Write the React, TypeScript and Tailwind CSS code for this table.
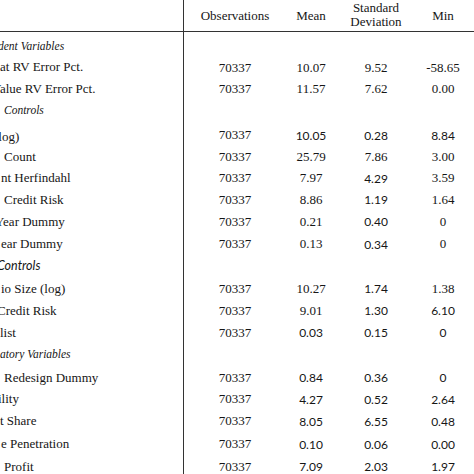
import React from "react";

type Cell = { v: string; sans?: boolean };
type Row = {
  h: string;
  label: string;
  ml: string;
  kind?: "ital" | "italSans";
  cells?: Cell[];
  extra?: string;
};

const S = (v: string): Cell => ({ v, sans: true });
const T = (v: string): Cell => ({ v });

const rows: Row[] = [
  { h: "h-[25px]", extra: "pt-[5px]", label: "dent Variables", ml: "-ml-[2px]", kind: "ital" },
  { h: "h-[20px]", extra: "-mt-[2px]", label: "at RV Error Pct.", ml: "ml-0", cells: [T("70337"), T("10.07"), T("9.52"), T("-58.65")] },
  { h: "h-[22px]", label: "Value RV Error Pct.", ml: "-ml-[8px]", cells: [T("70337"), T("11.57"), T("7.62"), T("0.00")] },
  { h: "h-[24px]", label: "Controls", ml: "ml-[4px]", kind: "ital" },
  { h: "h-[23px]", extra: "pt-[3px]", label: "(log)", ml: "-ml-[6px]", cells: [T("70337"), S("10.05"), S("0.28"), S("8.84")] },
  { h: "h-[21px]", label: "Count", ml: "ml-[4px]", cells: [T("70337"), T("25.79"), T("7.86"), T("3.00")] },
  { h: "h-[21px]", label: "nt Herfindahl", ml: "ml-[1px]", cells: [T("70337"), T("7.97"), S("4.29"), T("3.59")] },
  { h: "h-[22px]", label: "Credit Risk", ml: "ml-[4px]", cells: [T("70337"), T("8.86"), S("1.19"), T("1.64")] },
  { h: "h-[22px]", label: "Year Dummy", ml: "-ml-[5px]", cells: [T("70337"), T("0.21"), S("0.40"), T("0")] },
  { h: "h-[23px]", label: "ear Dummy", ml: "ml-[1px]", cells: [T("70337"), T("0.13"), S("0.34"), T("0")] },
  { h: "h-[22px]", label: "Controls", ml: "-ml-[3px]", kind: "italSans" },
  { h: "h-[22px]", label: "io Size (log)", ml: "ml-[1px]", cells: [T("70337"), T("10.27"), S("1.74"), T("1.38")] },
  { h: "h-[22px]", label: "Credit Risk", ml: "-ml-[3px]", cells: [T("70337"), T("9.01"), S("1.30"), S("6.10")] },
  { h: "h-[22px]", label: "list", ml: "ml-0", cells: [T("70337"), S("0.03"), S("0.15"), S("0")] },
  { h: "h-[23px]", label: "atory Variables", ml: "ml-0", kind: "ital" },
  { h: "h-[22px]", label: "Redesign Dummy", ml: "ml-[4px]", cells: [T("70337"), S("0.84"), S("0.36"), S("0")] },
  { h: "h-[21px]", label: "ility", ml: "-ml-[2px]", cells: [T("70337"), S("4.27"), S("0.52"), S("2.64")] },
  { h: "h-[23px]", label: "t Share", ml: "ml-0", cells: [T("70337"), S("8.05"), S("6.55"), S("0.48")] },
  { h: "h-[23px]", label: "e Penetration", ml: "ml-[1px]", cells: [T("70337"), S("0.10"), S("0.06"), S("0.00")] },
  { h: "h-[22px]", label: "Profit", ml: "ml-[4px]", cells: [T("70337"), S("7.09"), S("2.03"), S("1.97")] },
];

const serif = "font-['Liberation_Serif',serif]";
const sans = "font-['Lato',sans-serif]";

export default function App() {
  return (
    <div className={`w-[474px] h-[474px] overflow-hidden bg-white text-[#161616] ${serif} text-[13px] leading-none`}>
      <div className="grid grid-cols-[184px_102px_50px_80px_54px_4px] h-[32px] border-b border-[#333333]">
        <div className="border-r border-[#333333]" />
        <div className="flex items-center justify-center -mt-[1px]">Observations</div>
        <div className="flex items-center justify-center -mt-[1px]">Mean</div>
        <div className="flex flex-col items-center justify-center leading-[14px] -mt-[1px]">
          <span>Standard</span>
          <span>Deviation</span>
        </div>
        <div className="flex items-center justify-center -mt-[1px]">Min</div>
        <div />
      </div>
      {rows.map((r, i) => (
        <div key={i} className={`grid grid-cols-[184px_102px_50px_80px_54px_4px] ${r.h}`}>
          <div className={`border-r border-[#333333] overflow-hidden whitespace-nowrap flex items-center ${r.extra ?? ""}`}>
            <span
              className={`${r.ml} ${
                r.kind === "ital"
                  ? "italic text-[11.5px]"
                  : r.kind === "italSans"
                  ? `italic ${sans} text-[12.5px]`
                  : ""
              }`}
            >
              {r.label}
            </span>
          </div>
          {r.cells
            ? r.cells.map((c, j) => (
                <div
                  key={j}
                  className={`flex items-center justify-center ${c.sans ? `${sans} text-[12px] pt-[2px]` : ""}`}
                >
                  {c.v}
                </div>
              ))
            : [0, 1, 2, 3].map((j) => <div key={j} />)}
          <div />
        </div>
      ))}
    </div>
  );
}
